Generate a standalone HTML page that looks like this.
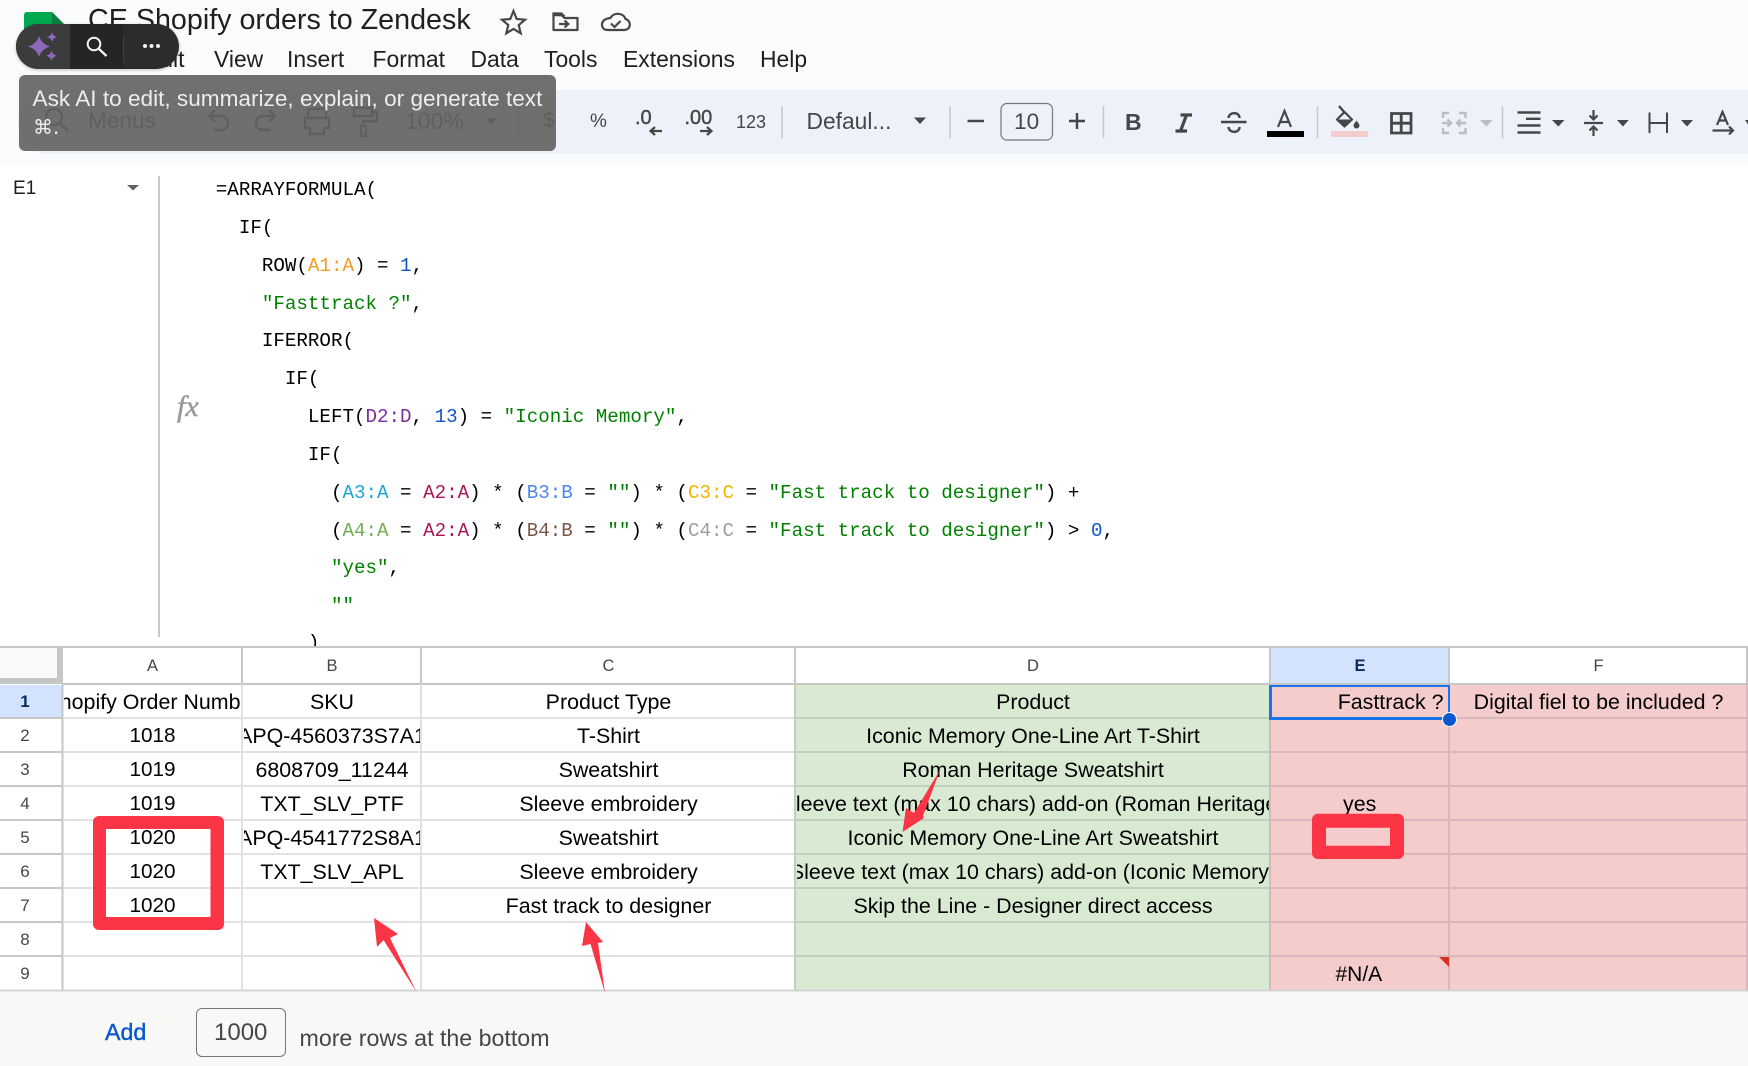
<!DOCTYPE html>
<html><head><meta charset="utf-8"><style>
html,body{margin:0;padding:0}
#r{position:relative;width:1748px;height:1066px;overflow:hidden;background:#f9fbfd;font-family:"Liberation Sans",sans-serif;color:#000}
.t{position:absolute;white-space:nowrap;line-height:0}
.b{position:absolute}
.m{font-size:22.9px;color:#1f1f1f}
.tb{color:#444746}
.f{font-family:"Liberation Mono",monospace;font-size:19.2px;color:#000;white-space:pre;left:215.8px}
.c{position:absolute;display:flex;align-items:center;justify-content:center;overflow:hidden;white-space:nowrap;font-size:21.4px;height:32px;color:#000}
.ca{left:64px;width:177px}.cb{left:244px;width:176px}.cc{left:423px;width:371px}.cd{left:797px;width:472px}
.n{font-size:20.7px}
.h{position:absolute;top:648px;height:34px;line-height:36px;text-align:center;font-size:16.5px;color:#444746}
.rn{position:absolute;left:0;width:50px;text-align:center;font-size:17px;line-height:0;color:#444746}
svg{position:absolute;overflow:visible}
</style></head><body><div id="r">

<!-- header -->
<div class="b" style="left:24px;top:12px;width:40px;height:30px;background:#00a94f;clip-path:polygon(0 0,70% 0,100% 40%,100% 100%,0 100%);border-radius:3px 0 0 0"></div>
<div class="b" style="left:52px;top:12px;width:12px;height:15px;background:#0b8043;clip-path:polygon(0 0,100% 80%,0 100%)"></div>
<div class="t" style="left:88px;top:20px;font-size:28.7px;color:#1f1f1f">CE Shopify orders to Zendesk</div>
<svg style="left:0;top:0" width="700" height="50" fill="none" stroke="#444746" stroke-width="2.2">
<path d="M513.500 11l3.200 8 8.300.7-6.300 5.400 2 8.200-7.200-4.400-7.200 4.400 2-8.200-6.300-5.400 8.300-.7z"/>
<path d="M553.500 30V15h8l3 3h13v12z" stroke-linejoin="round"/><path d="M553.500 16v-2.500h8l3 3" fill="#444746"/>
<path d="M559 24h9M564.500 20.500l3.800 3.500-3.800 3.500" stroke-width="2.200"/>
<path d="M609 30h15c7 0 8-9 1.500-11-2-6.500-12-7-15-1-6 .5-10 4-8 9 1 2.500 3 3 6.500 3z" stroke-linejoin="round"/>
<path d="M611 23.500l3.500 3.500 6-6" stroke-width="2.200"/>
</svg>
<div class="t m" style="left:145px;top:59px">Edit</div>
<div class="t m" style="left:214px;top:59px">View</div>
<div class="t m" style="left:287px;top:59px">Insert</div>
<div class="t m" style="left:372.500px;top:59px">Format</div>
<div class="t m" style="left:470.500px;top:59px">Data</div>
<div class="t m" style="left:544px;top:59px">Tools</div>
<div class="t m" style="left:623px;top:59px">Extensions</div>
<div class="t m" style="left:760px;top:59px">Help</div>

<!-- toolbar -->
<div class="b" style="left:18px;top:90px;width:1740px;height:64px;background:#edf2fa;border-radius:30px 0 0 30px"></div>
<svg style="left:0;top:0" width="1748" height="170" fill="none" stroke="#444746" stroke-width="2.400">
<!-- dim -->
<circle cx="54" cy="117" r="8"/><path d="M60 123l8 8"/>
<path d="M210 116h11a7 7 0 0 1 0 14h-7M215 110l-6 6 6 6"/>
<path d="M274 116h-11a7 7 0 0 0 0 14h7M269 110l6 6-6 6"/>
<path d="M308 118v-9h18v9M305 118h24v10h-5v6h-14v-6h-5z"/>
<path d="M354 108h18v8h-18zM372 112h5v9h-14v5M361 126h5v10h-5z"/>
<path d="M486 118h11l-5.500 6z" fill="#444746" stroke="none"/>
<path d="M518.500 106v32" stroke="#c4c7c5" stroke-width="1.500"/>
<!-- seps -->
<path d="M782 106v32M950 106v32M1103.500 106v32M1317.500 106v32M1502.500 106v32" stroke="#c4c7c5" stroke-width="1.500"/>
<!-- .0 arrows -->
<path d="M662 131h-11M655 127l-4.500 4 4.500 4" stroke-width="2.200"/>
<path d="M700 131h11M707 127l4.500 4-4.500 4" stroke-width="2.200"/>
<path d="M914 117.500h12l-6 6.500z" fill="#444746" stroke="none"/>
<path d="M967.500 121h16.500M1069 121h16M1077 113v16" stroke-width="2.400"/>
<rect x="1001" y="103.500" width="51.500" height="36.500" rx="6" stroke="#747775" stroke-width="1.200"/>
<!-- italic -->
<path d="M1180.500 115h11.500M1175.500 131h11.500M1186.500 115l-6 16" stroke-width="3.200"/>
<!-- strike -->
<path d="M1221 122h25.500" stroke-width="2.400"/>
<path d="M1228.500 118c.5-6.500 11-6.500 11 0M1228.500 127c.5 6.500 11 6.500 11 0" stroke-width="2.400"/>
<!-- text color -->
<path d="M1278 127l6.500-16 6.500 16M1280.500 122h8" stroke-width="2.200"/>
<rect x="1267" y="131" width="37" height="6" fill="#000" stroke="none"/>
<!-- fill -->
<path d="M1339 106l6 7" stroke-width="2.400"/>
<path d="M1344.500 112l7.500 7.500-7.500 7-7.500-7z" stroke-width="2.200" stroke-linejoin="round"/>
<path d="M1337 119.500h15l-7.500 7z" fill="#444746" stroke="none"/>
<path d="M1356.500 120.500c2 2.800 3 4 3 5a3 3 0 0 1-6 0c0-1 1-2.200 3-5z" fill="#444746" stroke="none"/>
<rect x="1331" y="131" width="37" height="6" fill="#f4cccc" stroke="none"/>
<!-- borders -->
<path d="M1391.500 113.500h19.500v19.500h-19.500zM1401.200 113.500v19.500M1391.500 123.200h19.500" stroke-width="2.800"/>
<!-- merge -->
<g stroke="#b9bdc6" stroke-width="2.400">
<path d="M1449 113h-6v5M1459 113h6.500v5M1449 133h-6v-5M1459 133h6.500v-5"/>
<path d="M1442 123h9M1447.500 119.500l3.500 3.500-3.500 3.500M1466 123h-9M1460.500 119.500l-3.500 3.500 3.500 3.500"/>
</g>
<path d="M1480 120h12.500l-6.200 6.500z" fill="#b9bdc6" stroke="none"/>
<!-- align -->
<path d="M1517.500 112.500h23M1526 118.800h14.500M1517.500 125.500h23M1517.500 132.500h23" stroke-width="2.400"/>
<path d="M1552 120h12.500l-6.200 6.500zM1617 120h11.800l-5.900 6.500zM1681 120h12l-6 6.500zM1745 120h8l-4 6z" fill="#444746" stroke="none"/>
<!-- valign -->
<path d="M1584 123h19" stroke-width="2.200"/>
<path d="M1593.500 110v9M1589.500 115.500l4 4 4-4M1593.500 136v-9M1589.500 130.500l4-4 4 4" stroke-width="2.200"/>
<!-- wrap -->
<path d="M1649.500 112.500v20.500M1667 112.500v20.500M1650 123h16" stroke-width="2"/>
<!-- rotate -->
<path d="M1717 125l5.500-13 5.500 13M1719 120.500h7" stroke-width="2.200"/>
<path d="M1712.500 130.500h20M1729 126.500l4 4-4 4" stroke-width="2.200"/>
</svg>
<div class="t" style="left:88px;top:121px;font-size:22.600px;color:#444746">Menus</div>
<div class="t" style="left:405px;top:121px;font-size:23px;color:#444746">100%</div>
<div class="t" style="left:543px;top:121px;font-size:21px;color:#444746">$</div>
<div class="t tb" style="left:590px;top:122px;font-size:19px">%</div>
<div class="t tb" style="left:635px;top:118px;font-size:20px;-webkit-text-stroke:.4px #444746">.0</div>
<div class="t tb" style="left:684.500px;top:118px;font-size:20px;-webkit-text-stroke:.4px #444746">.00</div>
<div class="t tb" style="left:736px;top:121.500px;font-size:18px">123</div>
<div class="t tb" style="left:806.500px;top:121px;font-size:22.800px">Defaul...</div>
<div class="t tb" style="left:1014px;top:121.500px;font-size:22.600px">10</div>
<div class="t tb" style="left:1125px;top:122px;font-size:23px;font-weight:bold">B</div>

<!-- tooltip -->
<div class="b" style="left:19px;top:75px;width:537px;height:76px;background:rgba(98,98,98,.91);border-radius:6px"></div>
<div class="t" style="left:32.500px;top:98.500px;font-size:22.600px;color:#eceded">Ask AI to edit, summarize, explain, or generate text</div>
<div class="t" style="left:33px;top:127px;font-size:20px;color:#eceded;font-family:'DejaVu Sans',sans-serif">⌘.</div>

<!-- pill -->
<div class="b" style="left:16px;top:24px;width:163px;height:45px;border-radius:23px;background:#2c2c2c;overflow:hidden;box-shadow:0 1px 3px rgba(0,0,0,.25)">
<div class="b" style="left:0;top:0;width:54px;height:45px;background:#3c3c3c"></div>
<div class="b" style="left:54px;top:0;width:53px;height:45px;background:#252525"></div>
</div>
<svg style="left:0;top:0" width="200" height="80">
<path d="M39 36Q41.500 44 50 46.500Q41.500 49 39 57Q36.500 49 28 46.500Q36.500 44 39 36z" fill="#8e68bb"/>
<path d="M52 32Q53 36 57 37Q53 38 52 42Q51 38 47 37Q51 36 52 32z" fill="#8e68bb"/>
<path d="M51.500 50.700Q52.500 54.700 57 55.700Q52.500 56.700 51.500 60.700Q50.500 56.700 46 55.700Q50.500 54.700 51.500 50.700z" fill="#8e68bb"/>
<circle cx="94" cy="44" r="6.300" fill="none" stroke="#f2f2f2" stroke-width="2"/>
<path d="M98.500 48.500l8 7.500" stroke="#f2f2f2" stroke-width="2.400"/>
<path d="M123.500 36v26" stroke="#3f3f3f" stroke-width="1"/>
<circle cx="145" cy="46" r="2" fill="#f2f2f2"/><circle cx="151.500" cy="46" r="2" fill="#f2f2f2"/><circle cx="158" cy="46" r="2" fill="#f2f2f2"/>
</svg>

<!-- formula bar -->
<div class="b" style="left:0;top:166px;width:1748px;height:481px;background:#fff"></div>
<div class="t" style="left:13px;top:188.500px;font-size:19px;color:#1f1f1f">E1</div>
<svg style="left:0;top:0" width="200" height="200"><path d="M127 185h12l-6 5.500z" fill="#5f6368"/></svg>
<div class="b" style="left:158px;top:176px;width:2px;height:461px;background:#c9c9c9"></div>
<div class="t" style="left:177px;top:407px;font-family:'Liberation Serif',serif;font-style:italic;font-size:30px;color:#9a9a9a;-webkit-text-stroke:.5px #9a9a9a">fx</div>
<div class="b" style="left:0;top:166px;width:1748px;height:480px;overflow:hidden">
<div class="t f" style="top:24.300px">=ARRAYFORMULA(</div>
<div class="t f" style="top:62px">  IF(</div>
<div class="t f" style="top:100px">    ROW(<span style="color:#f79a1e">A1:A</span>) = <span style="color:#1155cc">1</span>,</div>
<div class="t f" style="top:137.500px">    <span style="color:#008000">"Fasttrack ?"</span>,</div>
<div class="t f" style="top:175px">    IFERROR(</div>
<div class="t f" style="top:213px">      IF(</div>
<div class="t f" style="top:251px">        LEFT(<span style="color:#7b2d9b">D2:D</span>, <span style="color:#1155cc">13</span>) = <span style="color:#008000">"Iconic Memory"</span>,</div>
<div class="t f" style="top:289px">        IF(</div>
<div class="t f" style="top:326.500px">          (<span style="color:#1ea5d8">A3:A</span> = <span style="color:#ad1457">A2:A</span>) * (<span style="color:#4a86f0">B3:B</span> = <span style="color:#008000">""</span>) * (<span style="color:#f5b400">C3:C</span> = <span style="color:#008000">"Fast track to designer"</span>) +</div>
<div class="t f" style="top:364.500px">          (<span style="color:#74ad4f">A4:A</span> = <span style="color:#ad1457">A2:A</span>) * (<span style="color:#795548">B4:B</span> = <span style="color:#008000">""</span>) * (<span style="color:#9e9e9e">C4:C</span> = <span style="color:#008000">"Fast track to designer"</span>) &gt; <span style="color:#1155cc">0</span>,</div>
<div class="t f" style="top:402px">          <span style="color:#008000">"yes"</span>,</div>
<div class="t f" style="top:440px">          <span style="color:#008000">""</span></div>
<div class="t f" style="top:477px">        )</div>
</div>

<!-- grid backgrounds -->
<div class="b" style="left:0;top:646px;width:1748px;height:345px;background:#fff"></div>
<div class="b" style="left:795px;top:684px;width:475px;height:306px;background:#d9ead3"></div>
<div class="b" style="left:1270px;top:684px;width:478px;height:306px;background:#f4cccc"></div>
<div class="b" style="left:1269.500px;top:647px;width:179.500px;height:36px;background:#d3e3fd"></div>
<div class="b" style="left:0;top:685px;width:62px;height:33px;background:#d3e3fd"></div>
<div class="b" style="left:0;top:647px;width:58px;height:31px;background:#f8f9fa"></div>
<div class="b" style="left:0;top:678px;width:63px;height:6px;background:#c4c7c5"></div>
<div class="b" style="left:57px;top:647px;width:6px;height:37px;background:#c4c7c5"></div>
<div class="b" style="left:0;top:646px;width:1748px;height:1.500px;background:#c7c7c7"></div>
<div class="b" style="left:63px;top:683px;width:1685px;height:2px;background:#c4c7c5"></div>
<svg style="left:0;top:0" width="1748" height="1066" shape-rendering="crispEdges">
<g stroke-width="2">
<g stroke="#c7c7c7"><path d="M242 647v37M421 647v37M795 647v37M1270 647v37M1449 647v37M1747 647v37M62.500 684v307M0 718h62M0 752h62M0 786h62M0 820h62M0 854h62M0 888h62M0 922h62M0 956h62"/></g>
<g stroke="#e1e1e1"><path d="M63 718h732M63 752h732M63 786h732M63 820h732M63 854h732M63 888h732M63 922h732M63 956h732M242 684v306M421 684v306"/></g>
<g stroke="#c0d0ba"><path d="M795 718h475M795 752h475M795 786h475M795 820h475M795 854h475M795 888h475M795 922h475M795 956h475M795 684v306"/></g>
<g stroke="#d8b8b8"><path d="M1270 718h478M1270 752h478M1270 786h478M1270 820h478M1270 854h478M1270 888h478M1270 922h478M1270 956h478M1270 684v306M1449 684v306M1747 684v306"/></g>
<path d="M0 990.500h1748" stroke="#d2d4d2"/>
</g></svg>

<div class="h" style="left:63px;width:179px">A</div>
<div class="h" style="left:243px;width:178px">B</div>
<div class="h" style="left:422px;width:373px">C</div>
<div class="h" style="left:796px;width:474px">D</div>
<div class="h" style="left:1271px;width:178px;font-weight:bold;color:#0b2a5e">E</div>
<div class="h" style="left:1450px;width:297px">F</div>

<div class="rn" style="top:702px;font-weight:bold;color:#0b2a5e">1</div>
<div class="rn" style="top:736px">2</div><div class="rn" style="top:770px">3</div><div class="rn" style="top:804px">4</div><div class="rn" style="top:838px">5</div><div class="rn" style="top:872px">6</div><div class="rn" style="top:906px">7</div><div class="rn" style="top:940px">8</div><div class="rn" style="top:974px">9</div>

<!-- Row 1 -->
<div class="c ca" style="top:686px">Shopify Order Number</div><div class="c cb" style="top:686px">SKU</div><div class="c cc" style="top:686px">Product Type</div><div class="c cd" style="top:686px">Product</div>
<div class="c" style="top:686px;left:1450px;width:297px">Digital fiel to be included ?</div>
<!-- Row 2 -->
<div class="c ca n" style="top:720px">1018</div><div class="c cb" style="top:720px">APQ-4560373S7A1</div><div class="c cc" style="top:720px">T-Shirt</div><div class="c cd" style="top:720px">Iconic Memory One-Line Art T-Shirt</div>
<!-- Row 3 -->
<div class="c ca n" style="top:754px">1019</div><div class="c cb" style="top:754px">6808709_11244</div><div class="c cc" style="top:754px">Sweatshirt</div><div class="c cd" style="top:754px">Roman Heritage Sweatshirt</div>
<!-- Row 4 -->
<div class="c ca n" style="top:788px">1019</div><div class="c cb" style="top:788px">TXT_SLV_PTF</div><div class="c cc" style="top:788px">Sleeve embroidery</div><div class="c cd" style="top:788px">Sleeve text (max 10 chars) add-on (Roman Heritage)</div>
<!-- Row 5 -->
<div class="c ca n" style="top:822px">1020</div><div class="c cb" style="top:822px">APQ-4541772S8A1</div><div class="c cc" style="top:822px">Sweatshirt</div><div class="c cd" style="top:822px">Iconic Memory One-Line Art Sweatshirt</div>
<!-- Row 6 -->
<div class="c ca n" style="top:856px">1020</div><div class="c cb" style="top:856px">TXT_SLV_APL</div><div class="c cc" style="top:856px">Sleeve embroidery</div><div class="c cd" style="top:856px">Sleeve text (max 10 chars) add-on (Iconic Memory)</div>
<!-- Row 7 -->
<div class="c ca n" style="top:890px">1020</div><div class="c cc" style="top:890px">Fast track to designer</div><div class="c cd" style="top:890px">Skip the Line - Designer direct access</div>
<!-- E col -->
<div class="t" style="right:304.500px;top:702px;font-size:21.400px">Fasttrack ?</div>
<div class="t" style="left:1343px;top:804px;font-size:21.400px">yes</div>
<div class="t" style="left:1335.500px;top:974.500px;font-size:21px">#N/A</div>
<svg style="left:0;top:0" width="1748" height="1066"><path d="M1439 957h10v10z" fill="#d93025"/></svg>
<!-- selection -->
<div class="b" style="left:1269px;top:685px;width:181px;height:35px;box-sizing:border-box;border:2px solid #1a73e8;border-bottom-width:3px;border-left-width:3px"></div>
<div class="b" style="left:1442px;top:712px;width:13px;height:13px;border-radius:50%;background:#0b57d0;border:1px solid #fff"></div>

<!-- footer -->
<div class="b" style="left:0;top:991.500px;width:1748px;height:75px;background:#f8f9f7"></div>
<div class="t" style="left:105px;top:1032px;font-size:23.200px;color:#0b57d0;-webkit-text-stroke:.4px #0b57d0">Add</div>
<div class="b" style="left:195.500px;top:1008px;width:90.500px;height:49px;box-sizing:border-box;border:1.200px solid #747775;border-radius:6px"></div>
<div class="t" style="left:214px;top:1032.500px;font-size:24px;color:#444746">1000</div>
<div class="t" style="left:299.500px;top:1037.500px;font-size:23.200px;color:#444746">more rows at the bottom</div>

<!-- annotations -->
<svg style="left:0;top:0" width="1748" height="1066">
<path fill-rule="evenodd" d="M99 816h119a6 6 0 0 1 6 6v102a6 6 0 0 1-6 6h-119a6 6 0 0 1-6-6v-102a6 6 0 0 1 6-6zM106 829v88h104.500v-88z" fill="#fb3446"/>
<rect x="1325" y="827" width="66" height="19" fill="#f4cccc"/>
<path fill-rule="evenodd" d="M1318 813.700h80a6 6 0 0 1 6 6v33.300a6 6 0 0 1-6 6h-80a6 6 0 0 1-6-6v-33.300a6 6 0 0 1 6-6zM1326 827.700v18h64v-18z" fill="#fb3446"/>
<path d="M374 918l24 16-8 4 26.500 54-33-52-6.500 7z" fill="#fb3446"/>
<path d="M586 922l17 20-5 1 7 50-14.500-49-8.500 2z" fill="#fb3446"/>
<path d="M940 770l-17 46 1 2-21.500 14 3.500-24 8 5z" fill="#fb3446"/>
</svg>
</div></body></html>
